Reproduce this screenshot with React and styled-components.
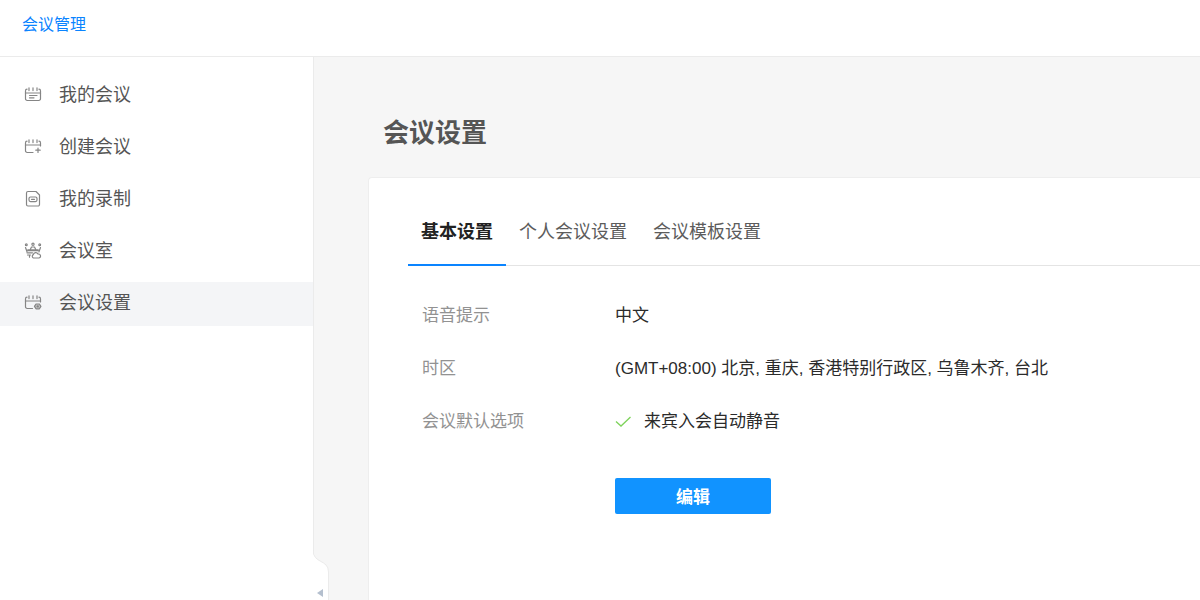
import React, {useState} from 'react';
import styled, {createGlobalStyle} from 'styled-components';

const colors = {
    primary: '#0a84ff',
    button: '#1193ff',
    border: '#ebebeb',
    page: '#f6f6f6',
    active: '#f4f5f7',
    icon: '#858585',
    text: '#2b2b2b',
    menu: '#555555',
    label: '#929292',
};

const GlobalStyles = createGlobalStyle`
  * {
    box-sizing: border-box;
  }
  body {
    margin: 0;
    overflow: hidden;
    background-color: white;
    color: ${colors.text};
    font-family: "Liberation Sans", "Noto Sans CJK SC", sans-serif;
  }
  button {
    font-family: inherit;
    border: none;
    cursor: pointer;
  }
`;

const Page = styled.div`
  display: flex;
  flex-direction: column;
  height: 100vh;
`;

const Header = styled.header`
  flex: none;
  height: 57px;
  padding: 13px 22px;
  border-bottom: 1px solid ${colors.border};
  a {
    color: ${colors.primary};
    font-size: 16px;
    line-height: 24px;
    text-decoration: none;
  }
`;

const Body = styled.div`
  display: flex;
  flex: 1;
  min-height: 0;
`;

const Sidebar = styled.aside`
  position: relative;
  flex: none;
  width: 314px;
  border-right: 1px solid ${colors.border};
  background-color: white;
`;

const Menu = styled.nav`
  display: flex;
  flex-direction: column;
  gap: 8px;
  padding-top: 17px;
`;

const MenuLink = styled.a`
  display: flex;
  align-items: center;
  gap: 17px;
  height: 44px;
  padding: 0 24px 2px;
  color: ${colors.menu};
  background-color: ${(props) => (props.$active ? colors.active : 'white')};
  font-size: 18px;
  line-height: 28px;
  text-decoration: none;
`;

const MenuIcon = styled.svg`
  flex: none;
  width: 18px;
  height: 18px;
  fill: none;
  stroke: ${colors.icon};
  stroke-width: 1.2;
  stroke-linecap: round;
  stroke-linejoin: round;
`;

const Collapse = styled.button`
  position: absolute;
  bottom: 0;
  left: 100%;
  width: 17px;
  height: 52px;
  padding: 0;
  background: none;
  svg {
    display: block;
  }
`;

const Content = styled.main`
  display: flex;
  flex: 1;
  flex-direction: column;
  min-width: 0;
  padding-left: 54px;
  background-color: ${colors.page};
`;

const Title = styled.h1`
  margin: 56px 0 24px 15px;
  color: #555555;
  font-size: 26px;
  line-height: 40px;
`;

const Card = styled.section`
  flex: 1;
  padding: 32px 0 0 39px;
  border: 1px solid #eeeeee;
  border-width: 1px 0 0 1px;
  border-radius: 4px 0 0 0;
  background-color: white;
`;

const Tabs = styled.div`
  display: flex;
  border-bottom: 1px solid #e4e4e4;
`;

const Tab = styled.button`
  height: 56px;
  margin-bottom: -1px;
  padding: 0 13px 14px;
  border-bottom: 2px solid ${(props) => (props.$active ? colors.primary : 'transparent')};
  background: none;
  color: ${(props) => (props.$active ? '#222222' : '#5c5c5c')};
  font-size: 18px;
  font-weight: ${(props) => (props.$active ? 'bold' : 'normal')};
`;

const Settings = styled.dl`
  display: grid;
  grid-template-columns: 193px 1fr;
  row-gap: 25px;
  margin: 36px 0 0;
  padding-left: 14px;
  font-size: 17px;
  line-height: 28px;
  dt {
    color: ${colors.label};
  }
  dd {
    display: flex;
    align-items: center;
    gap: 12px;
    margin: 0;
  }
`;

const EditButton = styled.button`
  width: 156px;
  height: 36px;
  margin: 42px 0 0 207px;
  padding: 0 0 2px;
  border-radius: 2px;
  background-color: ${colors.button};
  color: white;
  font-size: 17px;
  font-weight: bold;
`;

const CalendarTop = () => (
    <>
        <path d="M1.5 7h15" />
        <path d="M5 1.8v2.8M9 1.8v2.8M13 1.8v2.8" />
        <path d="M3 3.2Q1.5 3.2 1.5 5v2M15 3.2q1.5 0 1.5 1.8v2" />
    </>
);

const icons = {
    list: (
        <>
            <CalendarTop />
            <path d="M1.5 7v5.5A1.8 1.8 0 0 0 3.3 14.5h11.4a1.8 1.8 0 0 0 1.8-2V7M5.5 9.5h7.5M5.5 11.8h4.5" />
        </>
    ),
    create: (
        <>
            <CalendarTop />
            <path d="M1.5 7v5.5A1.8 1.8 0 0 0 3.3 14.5h5.7M16.5 7v1M14 10v4.4M11.8 12.2h4.4" />
        </>
    ),
    record: (
        <>
            <path d="M4 1.5h8L15.5 5v9.5a1.5 1.5 0 0 1-1.5 1.5H4a1.5 1.5 0 0 1-1.5-1.5V3A1.5 1.5 0 0 1 4 1.5z" />
            <rect x="5" y="7" width="8" height="4.6" rx="1.5" />
            <path d="M7.5 9.3h3" />
        </>
    ),
    room: (
        <>
            <circle cx="2.3" cy="2.8" r="0.9" />
            <circle cx="9" cy="2.2" r="1.1" />
            <circle cx="15.7" cy="2.8" r="0.9" />
            <path d="M1.5 5.5l1.6 4.5M16.5 5.5L14.9 10M6.3 7.5L7.5 5h3l1.2 2.5" />
            <path d="M4 8.3h10" strokeWidth="2" />
            <path d="M3 10.8h5.5M3.5 13h3M5.5 13v2.2" />
            <path d="M9.3 16a1.9 1.9 0 0 1 0-3.4 2.5 2.5 0 0 1 4.7-.5A2 2 0 0 1 15 16z" />
        </>
    ),
    settings: (
        <>
            <CalendarTop />
            <path d="M1.5 7v5.5A1.8 1.8 0 0 0 3.3 14.5h5.2M16.5 7v1" />
            <path d="M12 10h3.4l1.5 2.4-1.5 2.4H12l-1.5-2.4z" fill="#c4c4c4" />
            <circle cx="13.7" cy="12.4" r="0.6" />
        </>
    ),
};

const menuItems = [
    {icon: 'list', label: '我的会议'},
    {icon: 'create', label: '创建会议'},
    {icon: 'record', label: '我的录制'},
    {icon: 'room', label: '会议室'},
    {icon: 'settings', label: '会议设置'},
];

const tabs = ['基本设置', '个人会议设置', '会议模板设置'];

const App = () => {
    const [current, setCurrent] = useState('会议设置');
    const [tab, setTab] = useState(tabs[0]);

    return (
        <Page>
            <GlobalStyles />
            <Header><a href="#meetings">会议管理</a></Header>
            <Body>
                <Sidebar>
                    <Menu>
                        {menuItems.map(({icon, label}) => (
                            <MenuLink key={label} href={`#${icon}`} $active={label === current} onClick={() => setCurrent(label)}>
                                <MenuIcon viewBox="0 0 18 18" aria-hidden="true">{icons[icon]}</MenuIcon>
                                {label}
                            </MenuLink>
                        ))}
                    </Menu>
                    <Collapse type="button" aria-expanded="true">
                        <svg width="17" height="52" viewBox="0 0 17 52" aria-hidden="true">
                            <path d="M-1 2H0C0 16 15.5 11 15.5 24V52H-1z" fill="white" />
                            <path d="M0 2C0 16 15.5 11 15.5 24V52" fill="none" stroke={colors.border} />
                            <path d="M4 45l6-4v8z" fill="#b4bfce" />
                        </svg>
                    </Collapse>
                </Sidebar>
                <Content>
                    <Title>会议设置</Title>
                    <Card>
                        <Tabs role="tablist">
                            {tabs.map((name) => (
                                <Tab key={name} type="button" role="tab" aria-selected={name === tab} $active={name === tab} onClick={() => setTab(name)}>
                                    {name}
                                </Tab>
                            ))}
                        </Tabs>
                        <Settings>
                            <dt>语音提示</dt>
                            <dd>中文</dd>
                            <dt>时区</dt>
                            <dd>(GMT+08:00) 北京, 重庆, 香港特别行政区, 乌鲁木齐, 台北</dd>
                            <dt>会议默认选项</dt>
                            <dd>
                                <svg width="17" height="12" viewBox="0 0 17 12" aria-hidden="true">
                                    <path d="M1 5.5L6 10 15.5 1" fill="none" stroke="#7ed35b" strokeWidth="1.3" />
                                </svg>
                                来宾入会自动静音
                            </dd>
                        </Settings>
                        <EditButton type="button">编辑</EditButton>
                    </Card>
                </Content>
            </Body>
        </Page>
    );
};

export default App;
